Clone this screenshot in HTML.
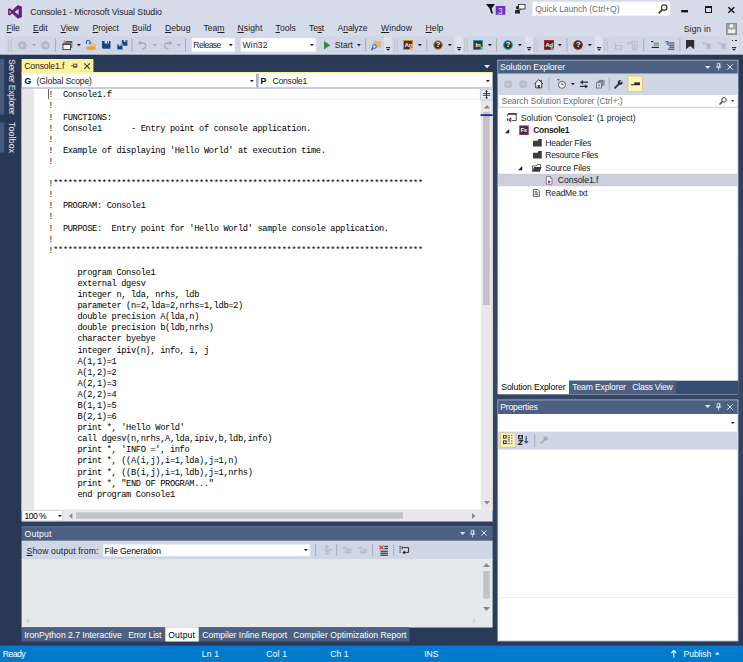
<!DOCTYPE html>
<html><head><meta charset="utf-8"><title>Console1 - Microsoft Visual Studio</title>
<style>
*{box-sizing:border-box;margin:0;padding:0}
html,body{width:743px;height:662px;overflow:hidden;background:#293955}
body{position:relative;font-family:"Liberation Sans",sans-serif;font-size:8.6px;color:#1e1e1e;line-height:1}
.a,svg{position:absolute}
svg{overflow:visible}
.t{position:absolute;white-space:pre;line-height:12px}
u{text-decoration:underline;text-underline-offset:0.8px;text-decoration-thickness:0.7px}
.code{position:absolute;left:48.3px;top:90.4px;font-family:"Liberation Mono",monospace;font-size:8.7px;letter-spacing:-0.35px;line-height:11.1px;white-space:pre;color:#000}
.hdr{background:#4d6082}
.tb{background:#cfd6e5}
.sep{position:absolute;width:1px;background:#a0a8bc}
.grip{position:absolute;width:4px;height:12px;background-image:radial-gradient(circle,#8a93a8 0.5px,transparent 0.7px);background-size:2px 2px}
.combo{position:absolute;background:#fff;border:1px solid #e9ecf4}
.ovf{position:absolute;width:7.8px;height:16.7px;background:#dde1ed;margin-top:-0.7px}
</style></head><body>
<div class="a" style="left:22px;top:54px;width:721px;height:592px;background:linear-gradient(#293955 0%,#35496a 50%,#293955 100%)"></div>
<!-- ===== top chrome ===== -->
<svg style="left:0px;top:0px" width="743" height="55"><rect x="0" y="0" width="743" height="54.7" fill="#d6dbe9"/></svg>
<!-- VS logo -->
<svg style="left:8.1px;top:4.9px" width="14" height="13.8" viewBox="0 0 14 14"><path fill="#68217a" fill-rule="evenodd" d="M10 0 L14 1.8 V12.2 L10 14 L4.2 8.7 L1.6 10.7 L0 9.9 V4.1 L1.6 3.3 L4.2 5.3 Z M10.6 4 L6.5 7 L10.6 10 Z M1.5 5.5 L3.1 7 L1.5 8.5 Z"/></svg>
<!-- notification flag + badge -->
<svg style="left:485.5px;top:4.2px" width="9" height="10" viewBox="0 0 9 10"><path fill="#111" d="M0 0 H9 L5.6 4.6 L7 9.6 L5.3 9.6 L3.6 4.6 Z"/></svg>
<svg style="left:495px;top:6px" width="11" height="9"><rect x="0.7" y="0" width="9.6" height="8.7" fill="#6a2fc4"/></svg>
<div class="t" style="left:498.1px;top:4.9px;font-size:8.4px;color:#e9dcff">3</div>
<!-- feedback icon -->
<svg style="left:514.8px;top:4.2px" width="10.4" height="9.6" viewBox="0 0 10.4 9.6"><rect x="3.6" y="0.4" width="6.4" height="4.6" fill="#fff" stroke="#222" stroke-width="0.8"/><path d="M5 5 L4.2 6.8 L6.6 5 Z" fill="#222"/><circle cx="2.5" cy="3.6" r="1.6" fill="#222"/><path d="M0 9.6 V7.2 Q0 5.6 2.5 5.6 Q5 5.6 5 7.2 V9.6 Z" fill="#222"/></svg>
<!-- quick launch -->
<svg style="left:532px;top:1px" width="139" height="15"><rect x="0" y="0.4" width="138.6" height="14.6" fill="#e8ebf3"/></svg>
<svg style="left:532px;top:2px" width="138" height="14"><rect x="0.7" y="0.1" width="137.2" height="13.2" fill="#ffffff"/></svg>
<svg style="left:658.2px;top:3.6px" width="10" height="10" viewBox="0 0 9 9"><circle cx="5.6" cy="3.2" r="2.5" fill="none" stroke="#3c3c3c" stroke-width="1.1"/><path d="M3.8 5 L0.6 8.4" stroke="#3c3c3c" stroke-width="1.5"/></svg>
<!-- window buttons -->
<svg style="left:681px;top:10px" width="7" height="3"><rect x="0.2" y="0" width="6.8" height="2.4" fill="#16161d"/></svg>
<div class="a" style="left:705px;top:6.3px;width:6.6px;height:6.4px;border:1px solid #16161d;border-top-width:2.2px"></div>
<svg style="left:728.2px;top:6.6px" width="6.6" height="6" viewBox="0 0 6.6 6"><path d="M0.3 0.2 L6.3 5.8 M6.3 0.2 L0.3 5.8" stroke="#16161d" stroke-width="1.5"/></svg>
<!-- user icon -->
<div class="a" style="left:725.9px;top:22.9px;width:11.3px;height:11.7px;background:#9fa1a7;border:0.7px solid #8e9096"></div>
<svg style="left:726px;top:23px" width="11.2" height="11.6" viewBox="0 0 11.2 11.6"><circle cx="5.5" cy="2.9" r="1.9" fill="#f3f3f5"/><path d="M2.2 6.3 H4.3 L5.6 7.6 L6.9 6.3 H9.1 V10 H2.2 Z" fill="#f3f3f5"/></svg>
<!-- ===== main toolbar ===== -->
<svg style="left:6px;top:36px" width="731" height="17"><rect x="0" y="0.3" width="730.8" height="16.7" fill="#d0d6e5"/></svg>
<svg style="left:8.3px;top:39px" width="4.2" height="12.4" viewBox="0 0 4.2 12.4" fill="#aab2c8"><rect x="0" y="0.4" width="1" height="1"/><rect x="3.1" y="0.4" width="1" height="1"/><rect x="0" y="3.1" width="1" height="1"/><rect x="3.1" y="3.1" width="1" height="1"/><rect x="0" y="5.8" width="1" height="1"/><rect x="3.1" y="5.8" width="1" height="1"/><rect x="0" y="8.6" width="1" height="1"/><rect x="3.1" y="8.6" width="1" height="1"/><rect x="0" y="11.4" width="1" height="1"/><rect x="3.1" y="11.4" width="1" height="1"/><rect x="1.6" y="1.6" width="1" height="1"/><rect x="1.6" y="4.4" width="1" height="1"/><rect x="1.6" y="7.2" width="1" height="1"/><rect x="1.6" y="10" width="1" height="1"/></svg>
<svg style="left:17.8px;top:41px" width="9" height="9" viewBox="0 0 9 9"><circle cx="4.4" cy="4.4" r="4.2" fill="#b4b7c1"/><path d="M6.6 4.4 H2.6 M4.3 2.6 L2.4 4.4 L4.3 6.2" stroke="#d6dbe9" stroke-width="1" fill="none"/></svg>
<svg style="left:32.2px;top:43.8px" width="3.8" height="2.2" viewBox="0 0 4 2.2"><path d="M0 0 H4 L2 2.2 Z" fill="#9a9eab"/></svg>
<svg style="left:41.3px;top:41px" width="9" height="9" viewBox="0 0 9 9"><circle cx="4.4" cy="4.4" r="4.2" fill="#b4b7c1"/><path d="M2.2 4.4 H6.2 M4.5 2.6 L6.4 4.4 L4.5 6.2" stroke="#d6dbe9" stroke-width="1" fill="none"/></svg>
<svg style="left:55px;top:38px" width="1" height="14"><rect x="0" y="0.7" width="0.9" height="12.8" fill="#a0a8bc"/></svg>
<!-- new project -->
<svg style="left:62.3px;top:40px" width="10.2" height="10" viewBox="0 0 10.2 10"><rect x="4" y="1.7" width="5.8" height="5.6" fill="#eef0f5" stroke="#3b3b3b" stroke-width="0.8"/><rect x="3.7" y="1.4" width="6.4" height="1.2" fill="#3b3b3b"/><rect x="1" y="4" width="7.4" height="5.6" fill="#f7f8fa" stroke="#3b3b3b" stroke-width="0.9"/><rect x="0.6" y="3.6" width="8.2" height="1.3" fill="#3b3b3b"/><path d="M2.6 0 L3.3 1.3 L4.9 1.7 L3.5 2.4 L2.9 3.6 L2.1 2.5 L0.4 2.3 L1.8 1.4 Z" fill="#d58a1e"/></svg>
<svg style="left:77.2px;top:43.8px" width="3.8" height="2.2" viewBox="0 0 4 2.2"><path d="M0 0 H4 L2 2.2 Z" fill="#1e1e1e"/></svg>
<!-- open -->
<svg style="left:85.9px;top:40px" width="10.2" height="10" viewBox="0 0 10.2 10"><path d="M3.8 2.6 H6.4 L7 3.4 H10 V9.6 H3.8 Z" fill="#e2c48f"/><path d="M0.4 6.4 H9 L9.6 9.8 H0.4 Z" fill="#dfa646"/><path d="M0.9 3.6 A1.9 1.9 0 1 1 4 3" fill="none" stroke="#1c5fb0" stroke-width="1.1"/><path d="M2.7 2.4 L5.2 2.7 L4 4.6 Z" fill="#1c5fb0"/></svg>
<!-- save -->
<svg style="left:102px;top:41.2px" width="8.4" height="7.8" viewBox="0 0 8.4 7.8"><path d="M0 0 H8.4 V7.8 H1 L0 6.8 Z" fill="#13478b"/><rect x="2.6" y="0" width="4.4" height="2.5" fill="#d9deeb"/><rect x="5.2" y="0.3" width="1" height="1.8" fill="#13478b"/></svg>
<!-- save all -->
<svg style="left:116.5px;top:39.9px" width="10.4" height="9.8" viewBox="0 0 10.4 9.8"><path d="M4.8 0 H10.4 V5.8 H4.8 Z" fill="#13478b"/><rect x="6.6" y="0" width="2.8" height="1.7" fill="#d9deeb"/><rect x="8.2" y="0.2" width="0.7" height="1.2" fill="#13478b"/><path d="M0 4 H5.8 V9.8 H0.8 L0 9 Z" fill="#13478b" stroke="#d0d6e5" stroke-width="0.6"/><rect x="1.7" y="4.2" width="2.9" height="1.8" fill="#d9deeb"/><rect x="3.4" y="4.5" width="0.7" height="1.2" fill="#13478b"/></svg>
<svg style="left:131px;top:38px" width="2" height="14"><rect x="0.5" y="0.7" width="0.9" height="12.8" fill="#a0a8bc"/></svg>
<!-- undo / redo (disabled) -->
<svg style="left:137.5px;top:40.4px" width="9.4" height="9.6" viewBox="0 0 9.4 9.6"><path d="M1.2 3 H5.6 A2.9 2.9 0 0 1 5.6 8.6 L4 9.4" fill="none" stroke="#a7abb8" stroke-width="1.3"/><path d="M0 3 L3 0.4 V5.6 Z" fill="#a7abb8"/></svg>
<svg style="left:152.8px;top:43.8px" width="3.8" height="2.2" viewBox="0 0 4 2.2"><path d="M0 0 H4 L2 2.2 Z" fill="#9a9eab"/></svg>
<svg style="left:162.5px;top:40.4px" width="9.4" height="9.6" viewBox="0 0 9.4 9.6"><path d="M8.2 3 H3.8 A2.9 2.9 0 0 0 3.8 8.6 L5.4 9.4" fill="none" stroke="#a7abb8" stroke-width="1.3"/><path d="M9.4 3 L6.4 0.4 V5.6 Z" fill="#a7abb8"/></svg>
<svg style="left:176.8px;top:43.8px" width="3.8" height="2.2" viewBox="0 0 4 2.2"><path d="M0 0 H4 L2 2.2 Z" fill="#9a9eab"/></svg>
<svg style="left:185px;top:38px" width="1" height="14"><rect x="0" y="0.7" width="0.9" height="12.8" fill="#a0a8bc"/></svg>
<svg style="left:191px;top:37px" width="45" height="16"><rect x="0.3" y="0.6" width="44" height="14.6" fill="#e6e9f2"/></svg>
<svg style="left:192px;top:38px" width="43" height="14"><rect x="0.1" y="0.4" width="42.4" height="13" fill="#ffffff"/></svg>
<svg style="left:228.8px;top:43.8px" width="3.8" height="2.2" viewBox="0 0 4 2.2"><path d="M0 0 H4 L2 2.2 Z" fill="#1e1e1e"/></svg>
<svg style="left:240px;top:37px" width="77" height="16"><rect x="0.5" y="0.6" width="75.8" height="14.6" fill="#e6e9f2"/></svg>
<svg style="left:241px;top:38px" width="75" height="14"><rect x="0.3" y="0.4" width="74.2" height="13" fill="#ffffff"/></svg>
<svg style="left:310px;top:43.8px" width="3.8" height="2.2" viewBox="0 0 4 2.2"><path d="M0 0 H4 L2 2.2 Z" fill="#1e1e1e"/></svg>
<svg style="left:324px;top:41px" width="6.2" height="8.4" viewBox="0 0 6.2 8.4"><path d="M0 0 L6.2 4.2 L0 8.4 Z" fill="#388a34"/></svg>
<svg style="left:356.8px;top:43.8px" width="3.8" height="2.2" viewBox="0 0 4 2.2"><path d="M0 0 H4 L2 2.2 Z" fill="#1e1e1e"/></svg>
<svg style="left:365px;top:38px" width="2" height="14"><rect x="0.2" y="0.7" width="0.9" height="12.8" fill="#a0a8bc"/></svg>
<!-- find in files -->
<svg style="left:371.3px;top:39.8px" width="10.2" height="10.4" viewBox="0 0 10.2 10.4"><path d="M2.4 0.4 H5.6 L6.4 1.4 H10.2 V7.4 H2.4 Z" fill="#dcb67a"/><circle cx="3.4" cy="6.6" r="1.9" fill="#d6dbe9" stroke="#1c5fb0" stroke-width="1"/><path d="M2 8 L0.3 10" stroke="#1c5fb0" stroke-width="1.3"/></svg>
<svg style="left:384px;top:36px" width="8" height="17"><rect x="0" y="0.3" width="7.8" height="16.7" fill="#dde1ed"/></svg>
<svg style="left:386.3px;top:46.9px" width="4.2" height="3.8" viewBox="0 0 4.2 3.8"><rect x="0" y="0" width="4.2" height="0.9" fill="#1e1e1e"/><path d="M0 1.7 H4.2 L2.1 3.8 Z" fill="#1e1e1e"/></svg>
<svg style="left:394.0px;top:39px" width="4.2" height="12.4" viewBox="0 0 4.2 12.4" fill="#aab2c8"><rect x="0" y="0.4" width="1" height="1"/><rect x="3.1" y="0.4" width="1" height="1"/><rect x="0" y="3.1" width="1" height="1"/><rect x="3.1" y="3.1" width="1" height="1"/><rect x="0" y="5.8" width="1" height="1"/><rect x="3.1" y="5.8" width="1" height="1"/><rect x="0" y="8.6" width="1" height="1"/><rect x="3.1" y="8.6" width="1" height="1"/><rect x="0" y="11.4" width="1" height="1"/><rect x="3.1" y="11.4" width="1" height="1"/><rect x="1.6" y="1.6" width="1" height="1"/><rect x="1.6" y="4.4" width="1" height="1"/><rect x="1.6" y="7.2" width="1" height="1"/><rect x="1.6" y="10" width="1" height="1"/></svg>
<!-- An icon -->
<div class="a" style="left:403px;top:40px;width:10.2px;height:10px;background:#40362e;border:1px solid #d98a2b"></div>
<div class="t" style="left:404.6px;top:38.6px;font-size:6.2px;font-weight:bold;color:#f0f0f0;letter-spacing:-0.3px">An</div>
<svg style="left:410.4px;top:46.6px" width="3.4" height="4" viewBox="0 0 3.4 4"><path d="M0 0 L3.4 2 L0 4 Z" fill="#f6a04a" stroke="#fff" stroke-width="0.4"/></svg>
<svg style="left:418.2px;top:43.8px" width="3.8" height="2.2" viewBox="0 0 4 2.2"><path d="M0 0 H4 L2 2.2 Z" fill="#1e1e1e"/></svg>
<svg style="left:426px;top:38px" width="2" height="14"><rect x="0.4" y="0.7" width="0.9" height="12.8" fill="#a0a8bc"/></svg>
<svg style="left:433px;top:40.4px" width="10" height="10" viewBox="0 0 10 10"><circle cx="5" cy="5" r="4.3" fill="#33302f" stroke="#d98a2b" stroke-width="1.1"/></svg>
<div class="t" style="left:435.8px;top:39.2px;font-size:7.6px;font-weight:bold;color:#fff">?</div>
<svg style="left:448.2px;top:43.8px" width="3.8" height="2.2" viewBox="0 0 4 2.2"><path d="M0 0 H4 L2 2.2 Z" fill="#1e1e1e"/></svg>
<svg style="left:455px;top:36px" width="8" height="17"><rect x="0" y="0.3" width="7.8" height="16.7" fill="#dde1ed"/></svg>
<svg style="left:457px;top:46.9px" width="4.2" height="3.8" viewBox="0 0 4.2 3.8"><rect x="0" y="0" width="4.2" height="0.9" fill="#1e1e1e"/><path d="M0 1.7 H4.2 L2.1 3.8 Z" fill="#1e1e1e"/></svg>
<svg style="left:464.0px;top:39px" width="4.2" height="12.4" viewBox="0 0 4.2 12.4" fill="#aab2c8"><rect x="0" y="0.4" width="1" height="1"/><rect x="3.1" y="0.4" width="1" height="1"/><rect x="0" y="3.1" width="1" height="1"/><rect x="3.1" y="3.1" width="1" height="1"/><rect x="0" y="5.8" width="1" height="1"/><rect x="3.1" y="5.8" width="1" height="1"/><rect x="0" y="8.6" width="1" height="1"/><rect x="3.1" y="8.6" width="1" height="1"/><rect x="0" y="11.4" width="1" height="1"/><rect x="3.1" y="11.4" width="1" height="1"/><rect x="1.6" y="1.6" width="1" height="1"/><rect x="1.6" y="4.4" width="1" height="1"/><rect x="1.6" y="7.2" width="1" height="1"/><rect x="1.6" y="10" width="1" height="1"/></svg>
<!-- In icon -->
<div class="a" style="left:473.3px;top:40px;width:10.2px;height:10px;background:#2f3a3c;border:1px solid #1f9a94"></div>
<div class="t" style="left:475.6px;top:38.6px;font-size:6.2px;font-weight:bold;color:#f0f0f0;letter-spacing:-0.2px">In</div>
<svg style="left:480.8px;top:46.6px" width="3.4" height="4" viewBox="0 0 3.4 4"><path d="M0 0 L3.4 2 L0 4 Z" fill="#35c4bc" stroke="#fff" stroke-width="0.4"/></svg>
<svg style="left:488.4px;top:43.8px" width="3.8" height="2.2" viewBox="0 0 4 2.2"><path d="M0 0 H4 L2 2.2 Z" fill="#1e1e1e"/></svg>
<svg style="left:496px;top:38px" width="2" height="14"><rect x="0.2" y="0.7" width="0.9" height="12.8" fill="#a0a8bc"/></svg>
<svg style="left:503px;top:40.4px" width="10" height="10" viewBox="0 0 10 10"><circle cx="5" cy="5" r="4.3" fill="#2f3334" stroke="#1f9a94" stroke-width="1.1"/></svg>
<div class="t" style="left:505.8px;top:39.2px;font-size:7.6px;font-weight:bold;color:#fff">?</div>
<svg style="left:517.8px;top:43.8px" width="3.8" height="2.2" viewBox="0 0 4 2.2"><path d="M0 0 H4 L2 2.2 Z" fill="#1e1e1e"/></svg>
<svg style="left:525px;top:36px" width="8" height="17"><rect x="0" y="0.3" width="7.8" height="16.7" fill="#dde1ed"/></svg>
<svg style="left:527px;top:46.9px" width="4.2" height="3.8" viewBox="0 0 4.2 3.8"><rect x="0" y="0" width="4.2" height="0.9" fill="#1e1e1e"/><path d="M0 1.7 H4.2 L2.1 3.8 Z" fill="#1e1e1e"/></svg>
<svg style="left:534.2px;top:39px" width="4.2" height="12.4" viewBox="0 0 4.2 12.4" fill="#aab2c8"><rect x="0" y="0.4" width="1" height="1"/><rect x="3.1" y="0.4" width="1" height="1"/><rect x="0" y="3.1" width="1" height="1"/><rect x="3.1" y="3.1" width="1" height="1"/><rect x="0" y="5.8" width="1" height="1"/><rect x="3.1" y="5.8" width="1" height="1"/><rect x="0" y="8.6" width="1" height="1"/><rect x="3.1" y="8.6" width="1" height="1"/><rect x="0" y="11.4" width="1" height="1"/><rect x="3.1" y="11.4" width="1" height="1"/><rect x="1.6" y="1.6" width="1" height="1"/><rect x="1.6" y="4.4" width="1" height="1"/><rect x="1.6" y="7.2" width="1" height="1"/><rect x="1.6" y="10" width="1" height="1"/></svg>
<!-- Ad icon -->
<div class="a" style="left:543.6px;top:40px;width:10.2px;height:10px;background:#3a2f30;border:1px solid #b3282d"></div>
<div class="t" style="left:545.2px;top:38.6px;font-size:6.2px;font-weight:bold;color:#f0f0f0;letter-spacing:-0.3px">Ad</div>
<svg style="left:551px;top:46.6px" width="3.4" height="4" viewBox="0 0 3.4 4"><path d="M0 0 L3.4 2 L0 4 Z" fill="#e0454a" stroke="#fff" stroke-width="0.4"/></svg>
<svg style="left:558.4px;top:43.8px" width="3.8" height="2.2" viewBox="0 0 4 2.2"><path d="M0 0 H4 L2 2.2 Z" fill="#1e1e1e"/></svg>
<svg style="left:566px;top:38px" width="2" height="14"><rect x="0.5" y="0.7" width="0.9" height="12.8" fill="#a0a8bc"/></svg>
<svg style="left:573.3px;top:40.4px" width="10" height="10" viewBox="0 0 10 10"><circle cx="5" cy="5" r="4.3" fill="#332d2d" stroke="#9c2a2e" stroke-width="1.1"/></svg>
<div class="t" style="left:576.1px;top:39.2px;font-size:7.6px;font-weight:bold;color:#fff">?</div>
<svg style="left:588.2px;top:43.8px" width="3.8" height="2.2" viewBox="0 0 4 2.2"><path d="M0 0 H4 L2 2.2 Z" fill="#1e1e1e"/></svg>
<svg style="left:594px;top:36px" width="9" height="17"><rect x="0.8" y="0.3" width="7.8" height="16.7" fill="#dde1ed"/></svg>
<svg style="left:596.8px;top:46.9px" width="4.2" height="3.8" viewBox="0 0 4.2 3.8"><rect x="0" y="0" width="4.2" height="0.9" fill="#1e1e1e"/><path d="M0 1.7 H4.2 L2.1 3.8 Z" fill="#1e1e1e"/></svg>
<svg style="left:604.0px;top:39px" width="4.2" height="12.4" viewBox="0 0 4.2 12.4" fill="#aab2c8"><rect x="0" y="0.4" width="1" height="1"/><rect x="3.1" y="0.4" width="1" height="1"/><rect x="0" y="3.1" width="1" height="1"/><rect x="3.1" y="3.1" width="1" height="1"/><rect x="0" y="5.8" width="1" height="1"/><rect x="3.1" y="5.8" width="1" height="1"/><rect x="0" y="8.6" width="1" height="1"/><rect x="3.1" y="8.6" width="1" height="1"/><rect x="0" y="11.4" width="1" height="1"/><rect x="3.1" y="11.4" width="1" height="1"/><rect x="1.6" y="1.6" width="1" height="1"/><rect x="1.6" y="4.4" width="1" height="1"/><rect x="1.6" y="7.2" width="1" height="1"/><rect x="1.6" y="10" width="1" height="1"/></svg>
<!-- disabled icons -->
<svg style="left:613.3px;top:40.6px" width="9.4" height="9" viewBox="0 0 9.4 9"><path d="M0.4 0.4 L2.6 2.4 V8.4 H9 V4.6 H2.6" fill="none" stroke="#b4b8c5" stroke-width="0.9"/></svg>
<svg style="left:628px;top:40.6px" width="9.6" height="9" viewBox="0 0 9.6 9"><path d="M0.4 4 V1.6 H4.2 M4.2 0.4 H9.2 V8.6 H4.2 Z M5.4 3 H8 M5.4 5 H8 M5.4 7 H8" fill="none" stroke="#b4b8c5" stroke-width="0.9"/></svg>
<svg style="left:643px;top:38px" width="2" height="14"><rect x="0.3" y="0.7" width="0.9" height="12.8" fill="#a0a8bc"/></svg>
<!-- indent icons -->
<svg style="left:650.6px;top:41.4px" width="8" height="7.4" viewBox="0 0 8 7.4"><path d="M0 0.6 H2.2" stroke="#1e1e1e" stroke-width="1"/><path d="M2.6 2.2 H8 M2.6 4 H8" stroke="#4a9a4a" stroke-width="1.1"/><path d="M0.8 6.4 H8" stroke="#1e1e1e" stroke-width="1.1"/></svg>
<svg style="left:665px;top:40.6px" width="9.4" height="9" viewBox="0 0 9.4 9"><path d="M0.4 1.2 Q2.4 -0.4 3.4 1.6 L2 3.6" fill="none" stroke="#1c5fb0" stroke-width="1.2"/><path d="M4.4 2 H9.4 M3.4 4.2 H9.4 M4.4 6.2 H9.4 M3 8.2 H9.4" stroke="#333" stroke-width="1"/></svg>
<svg style="left:679px;top:38px" width="2" height="14"><rect x="0.5" y="0.7" width="0.9" height="12.8" fill="#a0a8bc"/></svg>
<svg style="left:686px;top:40.3px" width="8.2" height="9.2" viewBox="0 0 8.2 9.2"><path d="M0 0 H8.2 V9.2 L4.1 6 L0 9.2 Z" fill="#2d2d30"/></svg>
<svg style="left:702.3px;top:40.6px" width="8.8" height="9" viewBox="0 0 8.8 9"><path d="M4.4 2.4 H8.6 V9 L6.5 7 L4.4 9 Z" fill="#b4b8c5"/><path d="M5 2.4 H0.6 M2.4 0.4 L0.4 2.4 L2.4 4.4" fill="none" stroke="#b4b8c5" stroke-width="0.9"/></svg>
<svg style="left:717px;top:40.6px" width="8.8" height="9" viewBox="0 0 8.8 9"><path d="M4.4 2.4 H8.6 V9 L6.5 7 L4.4 9 Z" fill="#b4b8c5"/><path d="M0 2.4 H4 M2.2 0.4 L4.2 2.4 L2.2 4.4" fill="none" stroke="#b4b8c5" stroke-width="0.9"/></svg>
<svg style="left:730px;top:36px" width="9" height="17"><rect x="0.4" y="0.3" width="7.8" height="16.7" fill="#dde1ed"/></svg>
<div class="a" style="left:731.8px;top:39.8px;width:1.4px;height:1.6px;background:#1e1e1e"></div>
<div class="a" style="left:735.2px;top:39.8px;width:1.4px;height:1.6px;background:#1e1e1e"></div>
<svg style="left:732.2px;top:46.9px" width="4.2" height="3.8" viewBox="0 0 4.2 3.8"><rect x="0" y="0" width="4.2" height="0.9" fill="#1e1e1e"/><path d="M0 1.7 H4.2 L2.1 3.8 Z" fill="#1e1e1e"/></svg>

<!-- ===== left strip ===== -->
<svg style="left:0px;top:58px" width="5" height="57"><rect x="0" y="0.8" width="4.2" height="55.7" fill="#465a7d"/></svg>
<svg style="left:0px;top:122px" width="5" height="31"><rect x="0" y="0.4" width="4.2" height="30.1" fill="#465a7d"/></svg>
<div class="a" style="left:5.9px;top:59.2px;width:12px;height:56px;writing-mode:vertical-rl;font-size:8.6px;line-height:12px;color:#e4e8f3;white-space:pre;letter-spacing:-0.27px">Server Explorer</div>
<div class="a" style="left:5.9px;top:122.4px;width:12px;height:31px;writing-mode:vertical-rl;font-size:8.6px;line-height:12px;color:#e4e8f3;white-space:pre;letter-spacing:0.22px">Toolbox</div>
<!-- ===== editor ===== -->
<svg style="left:21px;top:59px" width="73" height="14"><rect x="0.6" y="0" width="71.8" height="14" fill="#fff29d"/></svg>
<svg style="left:21px;top:72px" width="472" height="3"><rect x="0.6" y="0" width="471" height="2.6" fill="#fff29d"/></svg>
<svg style="left:21px;top:73px" width="472" height="16"><rect x="0.6" y="0.6" width="471" height="15" fill="#ffffff"/></svg>
<svg style="left:21px;top:88px" width="472" height="423"><rect x="0.6" y="0" width="471" height="422.5" fill="#ffffff"/></svg>
<svg style="left:21px;top:88px" width="14" height="423"><rect x="0.6" y="0" width="12.6" height="422.5" fill="#e6e7e8"/></svg>
<svg style="left:21px;top:509px" width="472" height="13"><rect x="0.6" y="0.5" width="471" height="12" fill="#e8e8ec"/></svg>
<svg style="left:21px;top:87px" width="472" height="2"><rect x="0.6" y="0.3" width="471" height="1.4" fill="#b0b9cf"/></svg>
<!-- tab pin + close -->
<svg style="left:70.6px;top:63.4px" width="6.4" height="5.4" viewBox="0 0 6.4 5.4"><path d="M0 2.7 H2.4 M2.6 0.6 V4.8 M2.6 1.2 H5.4 V3.6 H2.6 M2.6 4.2 H5.4 M5.8 0.4 V5" fill="none" stroke="#3c3c3c" stroke-width="0.8"/></svg>
<svg style="left:83.8px;top:62.8px" width="6.2" height="6.2" viewBox="0 0 6.2 6.2"><path d="M0.3 0.3 L5.9 5.9 M5.9 0.3 L0.3 5.9" stroke="#3c3c3c" stroke-width="1.1"/></svg>
<!-- tab well dropdown -->
<svg style="left:483.5px;top:65.2px" width="6" height="3.2" viewBox="0 0 6 3.2"><path d="M0 0 H6 L3 3.2 Z" fill="#e4e8f3"/></svg>
<!-- nav bar -->
<svg style="left:256px;top:73px" width="3" height="15"><rect x="0" y="0.8" width="2.7" height="13.6" fill="#a9b3c9"/></svg>
<svg style="left:250.2px;top:80px" width="3.8" height="2.2" viewBox="0 0 4 2.2"><path d="M0 0 H4 L2 2.2 Z" fill="#1e1e1e"/></svg>
<svg style="left:485.6px;top:80px" width="3.8" height="2.2" viewBox="0 0 4 2.2"><path d="M0 0 H4 L2 2.2 Z" fill="#1e1e1e"/></svg>
<!-- current line box + caret -->
<svg style="left:48px;top:98px" width="433" height="2"><rect x="0.3" y="0.6" width="432.3" height="0.9" fill="#e0e3ed"/></svg>
<svg style="left:479px;top:88px" width="2" height="12"><rect x="0.8" y="0.6" width="0.9" height="10.9" fill="#e4e6ef"/></svg>
<svg style="left:48px;top:89px" width="1" height="11"><rect x="0.1" y="0" width="0.9" height="10.2" fill="#555555"/></svg>
<!-- vertical scrollbar -->
<svg style="left:480px;top:88px" width="13" height="422"><rect x="0.8" y="0.6" width="11.8" height="421" fill="#e8e8ec"/></svg>
<svg style="left:480px;top:88px" width="13" height="13"><rect x="0.4" y="0.7" width="12.2" height="11.8" fill="#b9c2d6"/></svg>
<svg style="left:481px;top:89px" width="11" height="11"><rect x="0.2" y="0.5" width="10.6" height="10.2" fill="#e6ebf8"/></svg>
<svg style="left:483px;top:90px" width="7.2" height="9" viewBox="0 0 7.2 9"><rect x="0" y="3.3" width="7.2" height="0.8" fill="#1e1e1e"/><rect x="0" y="4.9" width="7.2" height="0.8" fill="#1e1e1e"/><rect x="3.2" y="0.6" width="0.8" height="7.8" fill="#1e1e1e"/><path d="M2.2 1.8 L3.6 0 L5 1.8 Z M2.2 7.2 L3.6 9 L5 7.2 Z" fill="#1e1e1e"/></svg>
<svg style="left:483.8px;top:105px" width="6" height="3.4" viewBox="0 0 6 3.4"><path d="M0 3.4 H6 L3 0 Z" fill="#868999"/></svg>
<svg style="left:483px;top:112px" width="7" height="193"><rect x="0.1" y="0" width="6.6" height="193" fill="#c2c3c9"/></svg>
<svg style="left:480px;top:114px" width="13" height="2"><rect x="0.6" y="0.3" width="12" height="1.6" fill="#0a0ad0"/></svg>
<svg style="left:483.8px;top:501.4px" width="6" height="3.4" viewBox="0 0 6 3.4"><path d="M0 0 H6 L3 3.4 Z" fill="#868999"/></svg>
<!-- bottom row -->
<svg style="left:21px;top:510px" width="43" height="12"><rect x="0.8" y="0" width="41.4" height="11.2" fill="#ccd0dc"/></svg>
<svg style="left:22px;top:510px" width="41" height="11"><rect x="0.6" y="0.8" width="39.8" height="9.6" fill="#ffffff"/></svg>
<svg style="left:57.6px;top:514.8px" width="3.8" height="2.2" viewBox="0 0 4 2.2"><path d="M0 0 H4 L2 2.2 Z" fill="#1e1e1e"/></svg>
<svg style="left:68.6px;top:512.6px" width="3.4" height="6" viewBox="0 0 3.4 6"><path d="M3.4 0 V6 L0 3 Z" fill="#868999"/></svg>
<svg style="left:76px;top:512px" width="327" height="7"><rect x="0" y="0.4" width="327" height="6.4" fill="#c2c3c9"/></svg>
<svg style="left:472.4px;top:512.6px" width="3.4" height="6" viewBox="0 0 3.4 6"><path d="M0 0 V6 L3.4 3 Z" fill="#868999"/></svg>

<div class="code">!  Console1.f
!
!  FUNCTIONS:
!  Console1      - Entry point of console application.
!
!  Example of displaying 'Hello World' at execution time.
!

!****************************************************************************
!
!  PROGRAM: Console1
!
!  PURPOSE:  Entry point for 'Hello World' sample console application.
!
!****************************************************************************

      program Console1
      external dgesv
      integer n, lda, nrhs, ldb
      parameter (n=2,lda=2,nrhs=1,ldb=2)
      double precision A(lda,n)
      double precision b(ldb,nrhs)
      character byebye
      integer ipiv(n), info, i, j
      A(1,1)=1
      A(1,2)=2
      A(2,1)=3
      A(2,2)=4
      B(1,1)=5
      B(2,1)=6
      print *, 'Hello World'
      call dgesv(n,nrhs,A,lda,ipiv,b,ldb,info)
      print *, 'INFO =', info
      print *, ((A(i,j),i=1,lda),j=1,n)
      print *, ((B(i,j),i=1,ldb),j=1,nrhs)
      print *, "END OF PROGRAM..."
      end program Console1</div>
<!-- ===== output ===== -->
<svg style="left:21px;top:526px" width="472" height="3"><rect x="0.6" y="0.3" width="471" height="2" fill="#66789a"/></svg>
<svg style="left:21px;top:527px" width="472" height="15"><rect x="0.6" y="0.2" width="471" height="14.5" fill="#4d6082"/></svg>
<svg style="left:21px;top:540px" width="472" height="21"><rect x="0.6" y="0.7" width="471" height="19.5" fill="#cfd6e5"/></svg>
<svg style="left:21px;top:559px" width="472" height="69"><rect x="0.6" y="0.2" width="471" height="68.3" fill="#e7e8ec"/></svg>
<!-- header buttons -->
<svg style="left:459.6px;top:531.8px" width="5.4" height="3" viewBox="0 0 5.4 3"><path d="M0 0 H5.4 L2.7 3 Z" fill="#e4e8f3"/></svg>
<svg style="left:470.4px;top:529.6px" width="5.2" height="7.4" viewBox="0 0 5.2 7.4"><path d="M1.2 0.4 H4 V4 H1.2 Z M3.4 0.4 V4 M0 4.2 H5.2 M2.6 4.2 V7.4" fill="none" stroke="#e4e8f3" stroke-width="0.8"/></svg>
<svg style="left:481px;top:530.4px" width="6" height="6" viewBox="0 0 6 6"><path d="M0.3 0.3 L5.7 5.7 M5.7 0.3 L0.3 5.7" stroke="#e4e8f3" stroke-width="1"/></svg>
<!-- toolbar -->
<svg style="left:102px;top:544px" width="209" height="13"><rect x="0.8" y="0" width="207.4" height="12.6" fill="#e6e9f2"/></svg>
<svg style="left:103px;top:544px" width="207" height="12"><rect x="0.6" y="0.8" width="205.8" height="11" fill="#ffffff"/></svg>
<svg style="left:304.4px;top:549.4px" width="3.8" height="2.2" viewBox="0 0 4 2.2"><path d="M0 0 H4 L2 2.2 Z" fill="#1e1e1e"/></svg>
<svg style="left:315px;top:544px" width="2" height="12"><rect x="0.2" y="0.4" width="0.9" height="11.6" fill="#a0a8bc"/></svg>
<svg style="left:322.5px;top:545.2px" width="9" height="9.4" viewBox="0 0 9 9.4"><path d="M3 1 Q4.6 -0.4 5.4 1.2 Q4.8 2.6 3 3.2 Z" fill="none" stroke="#a9aebb" stroke-width="0.8"/><path d="M1.4 4.8 H9 M2.4 6.8 H6.6 M2.4 8.8 H6.6" stroke="#a9aebb" stroke-width="0.9"/></svg>
<svg style="left:336px;top:544px" width="2" height="12"><rect x="0.2" y="0.4" width="0.9" height="11.6" fill="#a0a8bc"/></svg>
<svg style="left:343.2px;top:545.8px" width="8.4" height="8.4" viewBox="0 0 8.4 8.4"><path d="M0.4 1.8 H4.4 M2 0.2 L0.4 1.8 L2 3.4" fill="none" stroke="#a9aebb" stroke-width="0.8"/><path d="M1.6 5 H8.4 M1.6 6.8 H8.4 M3.6 3.2 H8.4" stroke="#a9aebb" stroke-width="0.9"/></svg>
<svg style="left:358px;top:545.8px" width="8.8" height="8.4" viewBox="0 0 8.8 8.4"><path d="M0 1.8 H4 M2.4 0.2 L4 1.8 L2.4 3.4" fill="none" stroke="#a9aebb" stroke-width="0.8"/><path d="M2 5 H8.8 M2 6.8 H8.8 M5.4 3.2 H8.8" stroke="#a9aebb" stroke-width="0.9"/></svg>
<svg style="left:372px;top:544px" width="2" height="12"><rect x="0.2" y="0.4" width="0.9" height="11.6" fill="#a0a8bc"/></svg>
<svg style="left:379px;top:544.6px" width="9" height="10.8" viewBox="0 0 9 10.8"><path d="M0.4 0.6 L4.4 4.4 M4.4 0.6 L0.4 4.4" stroke="#c8321e" stroke-width="1.2"/><path d="M5.4 1.4 H9 M5.4 3.6 H9 M1.4 6.2 H9 M1.4 8.2 H9 M1.4 10.2 H9" stroke="#1e1e1e" stroke-width="1"/></svg>
<svg style="left:393px;top:544px" width="2" height="12"><rect x="0.2" y="0.4" width="0.9" height="11.6" fill="#a0a8bc"/></svg>
<svg style="left:399px;top:545.6px" width="10.4" height="8.8" viewBox="0 0 10.4 8.8"><path d="M0.4 0.6 H2.4 M0.4 2.4 H2.4 M0.4 4.4 H1.8 M0.4 6.2 H1.8" stroke="#1e1e1e" stroke-width="0.8"/><path d="M4.4 1.6 H9.6 V6.4 H4.4" fill="none" stroke="#1e1e1e" stroke-width="0.9"/><path d="M3.4 6.4 L5.8 4.4 V8.4 Z" fill="#1e1e1e"/><path d="M3.4 0.4 V3" stroke="#1e1e1e" stroke-width="0.8"/></svg>
<!-- scrollbars -->
<svg style="left:483.1px;top:563.2px" width="7" height="4" viewBox="0 0 6 3.4"><path d="M0 3.4 H6 L3 0 Z" fill="#868999"/></svg>
<svg style="left:483px;top:571px" width="7" height="28"><rect x="0.2" y="0" width="6.6" height="27.6" fill="#c2c3c9"/></svg>
<svg style="left:483.1px;top:607.4px" width="7" height="4" viewBox="0 0 6 3.4"><path d="M0 0 H6 L3 3.4 Z" fill="#868999"/></svg>
<svg style="left:26.4px;top:618.2px" width="3.2" height="5.6" viewBox="0 0 3.2 5.6"><path d="M3.2 0 V5.6 L0 2.8 Z" fill="#cfd0d8"/></svg>
<svg style="left:472.6px;top:618.2px" width="3.2" height="5.6" viewBox="0 0 3.2 5.6"><path d="M0 0 V5.6 L3.2 2.8 Z" fill="#cfd0d8"/></svg>
<!-- tabs -->
<svg style="left:21px;top:627px" width="389" height="15"><rect x="0.6" y="0.2" width="387.8" height="14.3" fill="#4d6082"/></svg>
<svg style="left:165px;top:627px" width="34" height="15"><rect x="0.3" y="0.2" width="33.4" height="14.3" fill="#ffffff"/></svg>

<!-- ===== solution explorer ===== -->
<svg style="left:497px;top:59px" width="242" height="336"><rect x="0.2" y="0.6" width="241.4" height="334.6" fill="#8e9bbc"/></svg>
<svg style="left:498px;top:60px" width="240" height="335"><rect x="0.1" y="0.4" width="239.6" height="334" fill="#ffffff"/></svg>
<svg style="left:498px;top:60px" width="240" height="15"><rect x="0.1" y="0.4" width="239.6" height="14" fill="#4d6082"/></svg>
<svg style="left:498px;top:73px" width="240" height="36"><rect x="0.1" y="0.5" width="239.6" height="34.6" fill="#cfd6e5"/></svg>
<svg style="left:498px;top:95px" width="239" height="12"><rect x="0.8" y="0" width="238.2" height="11.8" fill="#ffffff"/></svg>
<!-- header buttons -->
<svg style="left:704.8px;top:65.6px" width="5.4" height="3" viewBox="0 0 5.4 3"><path d="M0 0 H5.4 L2.7 3 Z" fill="#e4e8f3"/></svg>
<svg style="left:716px;top:63.2px" width="5.2" height="7.4" viewBox="0 0 5.2 7.4"><path d="M1.2 0.4 H4 V4 H1.2 Z M3.4 0.4 V4 M0 4.2 H5.2 M2.6 4.2 V7.4" fill="none" stroke="#e4e8f3" stroke-width="0.8"/></svg>
<svg style="left:727.2px;top:64px" width="6" height="6" viewBox="0 0 6 6"><path d="M0.3 0.3 L5.7 5.7 M5.7 0.3 L0.3 5.7" stroke="#e4e8f3" stroke-width="1"/></svg>
<!-- toolbar -->
<svg style="left:504.1px;top:79.8px" width="8.4" height="8.4" viewBox="0 0 9 9"><circle cx="4.5" cy="4.5" r="4.3" fill="#b9bcc6"/><path d="M6.8 4.5 H2.6 M4.3 2.7 L2.4 4.5 L4.3 6.3" stroke="#cfd6e5" stroke-width="1" fill="none"/></svg>
<svg style="left:519.1px;top:79.8px" width="8.4" height="8.4" viewBox="0 0 9 9"><circle cx="4.5" cy="4.5" r="4.3" fill="#b9bcc6"/><path d="M2.2 4.5 H6.4 M4.7 2.7 L6.6 4.5 L4.7 6.3" stroke="#cfd6e5" stroke-width="1" fill="none"/></svg>
<svg style="left:534px;top:79.4px" width="9.4" height="9.4" viewBox="0 0 9.4 9.4"><path d="M1.6 4.8 V9 H7.8 V4.8 L4.7 1.8 Z" fill="#f6f7fa"/><path d="M0.3 5 L4.7 0.7 L9.1 5" fill="none" stroke="#2d2d30" stroke-width="1"/><path d="M1.7 4.4 V8.9 H7.7 V4.4" fill="none" stroke="#2d2d30" stroke-width="0.9"/><rect x="3.7" y="6" width="2" height="3" fill="#2d2d30"/><rect x="6.6" y="0.9" width="1.1" height="2.2" fill="#2d2d30"/></svg>
<svg style="left:548px;top:77px" width="2" height="14"><rect x="0.5" y="0.3" width="0.9" height="13" fill="#a0a8bc"/></svg>
<svg style="left:556.6px;top:79px" width="9" height="9.8" viewBox="0 0 9 9.8"><circle cx="5" cy="5.8" r="3.5" fill="#f6f7fa" stroke="#2d2d30" stroke-width="0.7"/><path d="M5 3.8 V5.9 H6.8" fill="none" stroke="#2d2d30" stroke-width="0.7"/><path d="M0 0.2 H2.8 L1.4 1.8 Z" fill="#2d2d30"/></svg>
<svg style="left:570.6px;top:83.2px" width="3.8" height="2.2" viewBox="0 0 4 2.2"><path d="M0 0 H4 L2 2.2 Z" fill="#1e1e1e"/></svg>
<svg style="left:580px;top:79.8px" width="8" height="8.6" viewBox="0 0 8 8.6"><path d="M2 2.2 H8 M0 6.4 H6" stroke="#2d2d30" stroke-width="1.2"/><path d="M0 2.2 L2.8 0 V4.4 Z M8 6.4 L5.2 4.2 V8.6 Z" fill="#2d2d30"/></svg>
<svg style="left:595.6px;top:79.8px" width="8.4" height="8.4" viewBox="0 0 8.4 8.4"><path d="M2.8 0.4 H8 V5.2 M1.6 1.6 H6.8 V6.4" fill="none" stroke="#4a4a4e" stroke-width="0.7"/><rect x="0.4" y="2.8" width="5.2" height="5.2" fill="#e9eef8" stroke="#4a4a4e" stroke-width="0.7"/><rect x="1.8" y="4.2" width="2.4" height="2.4" fill="#7fa6dc"/></svg>
<svg style="left:608px;top:77px" width="2" height="14"><rect x="0.8" y="0.3" width="0.9" height="13" fill="#a0a8bc"/></svg>
<svg style="left:614.4px;top:79.6px" width="8.6" height="8.8" viewBox="0 0 8.6 8.8"><path d="M1 7.8 L5 3.8" stroke="#2d2d30" stroke-width="1.7" stroke-linecap="round"/><path d="M8.4 1.2 L6.8 2.8 L5.8 1.8 L7.4 0.2 A2.5 2.5 0 1 0 8.4 1.2 Z" fill="#2d2d30"/></svg>
<svg style="left:627px;top:75px" width="16" height="17"><rect x="0.6" y="0.6" width="15.2" height="16.4" fill="#e5c365"/></svg>
<svg style="left:628px;top:76px" width="14" height="16"><rect x="0.4" y="0.4" width="13.6" height="14.8" fill="#fdf4bf"/></svg>
<svg style="left:630.6px;top:81.6px" width="9" height="4" viewBox="0 0 9 4"><rect x="0" y="2.2" width="3.4" height="1" fill="#2d2d30"/><rect x="3.2" y="0.4" width="5.8" height="2.8" fill="#2d2d30"/></svg>
<!-- search icon -->
<svg style="left:718.6px;top:96.8px" width="8" height="8" viewBox="0 0 9 9"><circle cx="5.6" cy="3.2" r="2.5" fill="none" stroke="#3c3c3c" stroke-width="1.1"/><path d="M3.8 5 L0.6 8.4" stroke="#3c3c3c" stroke-width="1.5"/></svg>
<svg style="left:731px;top:100.2px" width="3.4" height="2" viewBox="0 0 4 2.2"><path d="M0 0 H4 L2 2.2 Z" fill="#3c3c3c"/></svg>
<!-- tree -->
<svg style="left:498px;top:173px" width="240" height="14"><rect x="0.1" y="0.8" width="239.6" height="12.4" fill="#cccedb"/></svg>
<!-- solution icon -->
<svg style="left:507px;top:113.3px" width="9.8" height="9" viewBox="0 0 9.8 9"><path d="M1.2 0.6 H9.2 V7.6 H5" fill="none" stroke="#3c3c3c" stroke-width="0.9"/><rect x="0.8" y="0.2" width="8.8" height="1.6" fill="#3c3c3c"/><path d="M0.8 1 V3.4" stroke="#3c3c3c" stroke-width="0.9"/><path d="M0 5.2 L1.4 6.4 L3.4 4.4 L4.4 4.9 V8.5 L3.4 9 L1.4 7 L0 8.2 Z M3.4 5.8 L2.4 6.7 L3.4 7.6 Z" fill="#68217a" fill-rule="evenodd"/></svg>
<!-- expanders -->
<svg style="left:505.1px;top:129px" width="4.2" height="4.2" viewBox="0 0 4 4"><path d="M4 0 V4 H0 Z" fill="#1e1e1e"/></svg>
<svg style="left:518.1px;top:166.3px" width="4.2" height="4.2" viewBox="0 0 4 4"><path d="M4 0 V4 H0 Z" fill="#1e1e1e"/></svg>
<!-- project icon -->
<svg style="left:519px;top:125px" width="10" height="10"><rect x="0.2" y="0.4" width="9.6" height="9.6" fill="#a4289c"/></svg>
<svg style="left:520px;top:126px" width="8" height="9"><rect x="0.1" y="0.3" width="7.8" height="7.8" fill="#3a3a3a"/></svg>
<div class="t" style="left:520.7px;top:124.2px;font-size:5.4px;font-weight:bold;color:#fff;letter-spacing:-0.1px">Fx</div>
<!-- folders -->
<svg style="left:532.5px;top:138.8px" width="8.8" height="7.6" viewBox="0 0 8.8 7.6"><path d="M0 1.8 H4.6 L5.6 0 H8.8 V7.6 H0 Z" fill="#3c3c3c"/></svg>
<svg style="left:532.5px;top:151.3px" width="8.8" height="7.6" viewBox="0 0 8.8 7.6"><path d="M0 1.8 H4.6 L5.6 0 H8.8 V7.6 H0 Z" fill="#3c3c3c"/></svg>
<svg style="left:532.3px;top:163.6px" width="9.6" height="7.8" viewBox="0 0 9.6 7.8"><path d="M0.4 7.4 V2 H4.4 L5.2 0.4 H8.6 V3" fill="none" stroke="#3c3c3c" stroke-width="0.8"/><path d="M0.2 7.8 L2 3 H9.6 L7.8 7.8 Z" fill="#3c3c3c"/></svg>
<!-- file icons -->
<svg style="left:545.7px;top:176.2px" width="6.4" height="8.6" viewBox="0 0 6.4 8.6"><path d="M0.4 0.4 H4.2 L6 2.2 V8.2 H0.4 Z" fill="#fff" stroke="#6a6a6a" stroke-width="0.8"/><path d="M4 0.4 V2.4 H6" fill="none" stroke="#6a6a6a" stroke-width="0.7"/><path d="M3.1 3.6 L3.7 4.9 L5 5.1 L4 6 L4.3 7.4 L3.1 6.7 L1.9 7.4 L2.2 6 L1.2 5.1 L2.5 4.9 Z" fill="#c218b0"/></svg>
<svg style="left:533.3px;top:188.7px" width="6.8" height="7.8" viewBox="0 0 6.8 7.8"><path d="M0.4 0.4 H4.6 L6.4 2.2 V7.4 H0.4 Z" fill="#fff" stroke="#3c3c3c" stroke-width="0.8"/><path d="M1.6 2.4 H3.8 M1.6 3.9 H5.2 M1.6 5.4 H5.2" stroke="#3c3c3c" stroke-width="0.8"/></svg>
<!-- tabs -->
<svg style="left:497px;top:380px" width="242" height="15"><rect x="0.2" y="0.7" width="241.4" height="13.6" fill="#364e6f"/></svg>
<svg style="left:569px;top:380px" width="107" height="14"><rect x="0" y="0.7" width="106.7" height="13.3" fill="#4d6082"/></svg>
<svg style="left:497px;top:380px" width="72" height="14"><rect x="0.2" y="0.7" width="71.8" height="13.3" fill="#8e9bbc"/></svg>
<svg style="left:498px;top:380px" width="71" height="14"><rect x="0.1" y="0" width="70.9" height="14" fill="#ffffff"/></svg>

<!-- ===== properties ===== -->
<svg style="left:497px;top:399px" width="242" height="243"><rect x="0.2" y="0.3" width="241.4" height="242.3" fill="#8e9bbc"/></svg>
<svg style="left:498px;top:400px" width="240" height="241"><rect x="0.1" y="0.2" width="239.6" height="240.5" fill="#ffffff"/></svg>
<svg style="left:498px;top:400px" width="240" height="14"><rect x="0.1" y="0.2" width="239.6" height="13.8" fill="#4d6082"/></svg>
<svg style="left:498px;top:431px" width="240" height="19"><rect x="0.1" y="0.6" width="239" height="18" fill="#cfd6e5"/></svg>
<svg style="left:498px;top:597px" width="240" height="1"><rect x="0.1" y="0" width="239.6" height="1" fill="#f0f0f0"/></svg>
<svg style="left:704.6px;top:405.2px" width="5.4" height="3" viewBox="0 0 5.4 3"><path d="M0 0 H5.4 L2.7 3 Z" fill="#e4e8f3"/></svg>
<svg style="left:716.2px;top:402.8px" width="5.2" height="7.4" viewBox="0 0 5.2 7.4"><path d="M1.2 0.4 H4 V4 H1.2 Z M3.4 0.4 V4 M0 4.2 H5.2 M2.6 4.2 V7.4" fill="none" stroke="#e4e8f3" stroke-width="0.8"/></svg>
<svg style="left:727.4px;top:403.6px" width="6" height="6" viewBox="0 0 6 6"><path d="M0.3 0.3 L5.7 5.7 M5.7 0.3 L0.3 5.7" stroke="#e4e8f3" stroke-width="1"/></svg>
<svg style="left:731.4px;top:422px" width="3.6" height="2.1" viewBox="0 0 4 2.2"><path d="M0 0 H4 L2 2.2 Z" fill="#1e1e1e"/></svg>
<svg style="left:500px;top:432px" width="16" height="16"><rect x="0" y="0.7" width="15.7" height="15" fill="#e5c365"/></svg>
<svg style="left:500px;top:433px" width="15" height="14"><rect x="0.8" y="0.5" width="14.1" height="13.4" fill="#fdf4bf"/></svg>
<svg style="left:503px;top:435.4px" width="9.6" height="9.6" viewBox="0 0 9.6 9.6"><rect x="0.5" y="0.5" width="2.6" height="2.6" fill="#fdf4bf" stroke="#2d2d30" stroke-width="1"/><rect x="0.5" y="5.9" width="2.6" height="2.6" fill="#fdf4bf" stroke="#2d2d30" stroke-width="1"/><path d="M4.6 0.6 H7 M4.6 2.4 H7 M4.6 4.2 H7 M4.6 6 H7 M4.6 8.6 H7 M8 0.6 H9.4 M8 3 H9.4 M8 6 H9.4 M8 8.6 H9.4" stroke="#555" stroke-width="0.9"/></svg>
<svg style="left:518.3px;top:435px" width="10.8" height="10" viewBox="0 0 10.8 10"><rect x="0" y="0" width="5" height="4.4" fill="#2d2d30"/><path d="M1.2 3.6 L2.5 0.8 L3.8 3.6 M1.8 2.6 H3.2" stroke="#fff" stroke-width="0.7" fill="none"/><path d="M0.6 5.6 H4.4 L0.6 9.4 H4.4" fill="none" stroke="#2d2d30" stroke-width="1.2"/><path d="M8.2 1 V8" stroke="#1c5fb0" stroke-width="1.3"/><path d="M5.8 6 L8.2 9 L10.6 6 Z" fill="#1c5fb0"/></svg>
<svg style="left:534px;top:434px" width="2" height="13"><rect x="0.3" y="0" width="0.9" height="13" fill="#a0a8bc"/></svg>
<svg style="left:540px;top:435.8px" width="8" height="8.2" viewBox="0 0 8.6 8.8"><path d="M1 7.8 L5 3.8" stroke="#a5a9b5" stroke-width="1.7" stroke-linecap="round"/><path d="M8.4 1.2 L6.8 2.8 L5.8 1.8 L7.4 0.2 A2.5 2.5 0 1 0 8.4 1.2 Z" fill="#a5a9b5"/></svg>

<!-- ===== status ===== -->
<svg style="left:0px;top:645px" width="743" height="17"><rect x="0" y="0.6" width="743" height="16.4" fill="#007acc"/></svg>
<svg style="left:670.6px;top:649.6px" width="5.6" height="7.8" viewBox="0 0 5.6 7.8"><path d="M2.8 1 V7.8" stroke="#fff" stroke-width="1.1"/><path d="M0.3 3.2 L2.8 0.6 L5.3 3.2" fill="none" stroke="#fff" stroke-width="1.1"/></svg>
<svg style="left:715px;top:652.2px" width="4.6" height="2.6" viewBox="0 0 4.6 2.6"><path d="M0 2.6 H4.6 L2.3 0 Z" fill="#fff"/></svg>
<div class="a" style="left:733px;top:652px;width:8px;height:8px;background-image:radial-gradient(circle,#7db9e6 0.5px,transparent 0.7px);background-size:2px 2px;clip-path:polygon(100% 0,100% 100%,0 100%)"></div>

<div class="t" style="left:30.15px;top:5.95px;font-size:8.8px;letter-spacing:-0.077px;color:#1e1e1e;">Console1 - Microsoft Visual Studio</div>
<div class="t" style="left:6.55px;top:22.02px;font-size:8.6px;letter-spacing:-0.240px;color:#1e1e1e;"><u>F</u>ile</div>
<div class="t" style="left:33.05px;top:22.02px;font-size:8.6px;letter-spacing:-0.103px;color:#1e1e1e;"><u>E</u>dit</div>
<div class="t" style="left:60.55px;top:22.02px;font-size:8.6px;letter-spacing:-0.146px;color:#1e1e1e;"><u>V</u>iew</div>
<div class="t" style="left:92.55px;top:22.02px;font-size:8.6px;letter-spacing:-0.050px;color:#1e1e1e;"><u>P</u>roject</div>
<div class="t" style="left:132.05px;top:22.02px;font-size:8.6px;letter-spacing:0.058px;color:#1e1e1e;"><u>B</u>uild</div>
<div class="t" style="left:165.05px;top:22.02px;font-size:8.6px;letter-spacing:0.014px;color:#1e1e1e;"><u>D</u>ebug</div>
<div class="t" style="left:203.55px;top:22.02px;font-size:8.6px;letter-spacing:-0.029px;color:#1e1e1e;">Tea<u>m</u></div>
<div class="t" style="left:237.55px;top:22.02px;font-size:8.6px;letter-spacing:0.090px;color:#1e1e1e;"><u>N</u>sight</div>
<div class="t" style="left:275.55px;top:22.02px;font-size:8.6px;letter-spacing:0.067px;color:#1e1e1e;"><u>T</u>ools</div>
<div class="t" style="left:309.05px;top:22.02px;font-size:8.6px;letter-spacing:-0.216px;color:#1e1e1e;">Te<u>s</u>t</div>
<div class="t" style="left:337.55px;top:22.02px;font-size:8.6px;letter-spacing:-0.097px;color:#1e1e1e;">A<u>n</u>alyze</div>
<div class="t" style="left:381.05px;top:22.02px;font-size:8.6px;letter-spacing:0.054px;color:#1e1e1e;"><u>W</u>indow</div>
<div class="t" style="left:425.55px;top:22.02px;font-size:8.6px;letter-spacing:0.053px;color:#1e1e1e;"><u>H</u>elp</div>
<div class="t" style="left:535.25px;top:3.02px;font-size:8.6px;letter-spacing:-0.073px;color:#6b6b73;">Quick Launch (Ctrl+Q)</div>
<div class="t" style="left:683.75px;top:22.52px;font-size:8.6px;letter-spacing:0.117px;color:#1e1e1e;">Sign in</div>
<div class="t" style="left:193.35px;top:39.02px;font-size:8.6px;letter-spacing:-0.590px;color:#1e1e1e;">Release</div>
<div class="t" style="left:242.55px;top:39.02px;font-size:8.6px;letter-spacing:0.168px;color:#1e1e1e;">Win32</div>
<div class="t" style="left:334.85px;top:39.02px;font-size:8.6px;letter-spacing:-0.011px;color:#1e1e1e;">Start</div>
<div class="t" style="left:24.25px;top:60.02px;font-size:8.6px;letter-spacing:-0.119px;color:#1e1e1e;">Console1.f</div>
<div class="t" style="left:24.55px;top:75.02px;font-size:8.6px;letter-spacing:0.013px;color:#000;font-weight:bold;">G</div>
<div class="t" style="left:36.55px;top:75.02px;font-size:8.6px;letter-spacing:-0.152px;color:#1e1e1e;">(Global Scope)</div>
<div class="t" style="left:260.55px;top:75.02px;font-size:8.6px;letter-spacing:0.166px;color:#000;font-weight:bold;">P</div>
<div class="t" style="left:272.55px;top:75.02px;font-size:8.6px;letter-spacing:-0.239px;color:#1e1e1e;">Console1</div>
<div class="t" style="left:24.55px;top:509.52px;font-size:8.6px;letter-spacing:-0.555px;color:#000;">100 %</div>
<div class="t" style="left:24.55px;top:528.02px;font-size:8.6px;letter-spacing:0.231px;color:#fff;">Output</div>
<div class="t" style="left:26.55px;top:544.52px;font-size:8.6px;letter-spacing:0.126px;color:#1e1e1e;"><u>S</u>how output from:</div>
<div class="t" style="left:104.55px;top:544.52px;font-size:8.6px;letter-spacing:-0.158px;color:#000;">File Generation</div>
<div class="t" style="left:24.25px;top:629.02px;font-size:8.6px;letter-spacing:-0.017px;color:#fff;">IronPython 2.7 Interactive</div>
<div class="t" style="left:128.25px;top:629.02px;font-size:8.6px;letter-spacing:-0.196px;color:#fff;">Error List</div>
<div class="t" style="left:168.25px;top:629.02px;font-size:8.6px;letter-spacing:0.181px;color:#000;">Output</div>
<div class="t" style="left:202.25px;top:629.02px;font-size:8.6px;letter-spacing:-0.027px;color:#fff;">Compiler Inline Report</div>
<div class="t" style="left:293.25px;top:629.02px;font-size:8.6px;letter-spacing:0.017px;color:#fff;">Compiler Optimization Report</div>
<div class="t" style="left:2.85px;top:648.02px;font-size:8.6px;letter-spacing:-0.509px;color:#fff;">Ready</div>
<div class="t" style="left:201.85px;top:648.02px;font-size:8.6px;letter-spacing:0.141px;color:#fff;">Ln 1</div>
<div class="t" style="left:266.25px;top:648.02px;font-size:8.6px;letter-spacing:0.167px;color:#fff;">Col 1</div>
<div class="t" style="left:330.25px;top:648.02px;font-size:8.6px;letter-spacing:0.011px;color:#fff;">Ch 1</div>
<div class="t" style="left:424.25px;top:648.02px;font-size:8.6px;letter-spacing:-0.043px;color:#fff;">INS</div>
<div class="t" style="left:683.55px;top:648.02px;font-size:8.6px;letter-spacing:-0.084px;color:#fff;">Publish</div>
<div class="t" style="left:500.05px;top:60.72px;font-size:8.6px;letter-spacing:-0.027px;color:#fff;">Solution Explorer</div>
<div class="t" style="left:501.55px;top:95.02px;font-size:8.6px;letter-spacing:-0.093px;color:#6b6b73;">Search Solution Explorer (Ctrl+;)</div>
<div class="t" style="left:520.75px;top:111.72px;font-size:8.6px;letter-spacing:0.026px;color:#1e1e1e;">Solution 'Console1' (1 project)</div>
<div class="t" style="left:533.25px;top:124.22px;font-size:8.6px;letter-spacing:-0.348px;color:#1e1e1e;font-weight:bold;">Console1</div>
<div class="t" style="left:545.25px;top:136.72px;font-size:8.6px;letter-spacing:-0.235px;color:#1e1e1e;">Header Files</div>
<div class="t" style="left:545.25px;top:149.22px;font-size:8.6px;letter-spacing:-0.329px;color:#1e1e1e;">Resource Files</div>
<div class="t" style="left:545.25px;top:161.62px;font-size:8.6px;letter-spacing:-0.230px;color:#1e1e1e;">Source Files</div>
<div class="t" style="left:557.85px;top:174.12px;font-size:8.6px;letter-spacing:-0.069px;color:#1e1e1e;">Console1.f</div>
<div class="t" style="left:545.25px;top:186.62px;font-size:8.6px;letter-spacing:-0.175px;color:#1e1e1e;">ReadMe.txt</div>
<div class="t" style="left:501.25px;top:381.02px;font-size:8.6px;letter-spacing:-0.074px;color:#000;">Solution Explorer</div>
<div class="t" style="left:572.35px;top:381.02px;font-size:8.6px;letter-spacing:-0.154px;color:#fff;">Team Explorer</div>
<div class="t" style="left:632.25px;top:381.02px;font-size:8.6px;letter-spacing:-0.216px;color:#fff;">Class View</div>
<div class="t" style="left:500.25px;top:401.02px;font-size:8.6px;letter-spacing:-0.167px;color:#fff;">Properties</div>
</body></html>
